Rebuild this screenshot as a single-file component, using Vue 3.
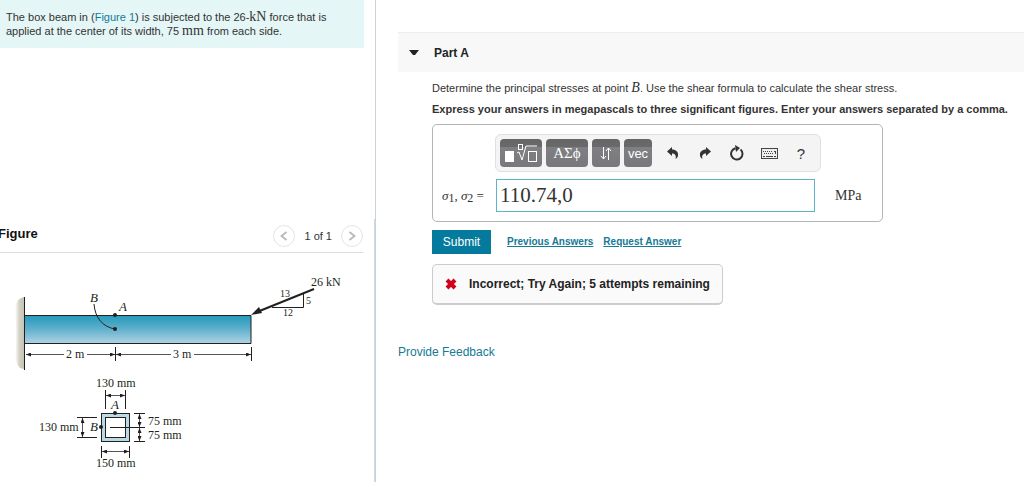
<template>
  <div class="page">
    <aside class="left">
      <section class="problem">
        <p>
          The box beam in (<a href="#figure">Figure 1</a>) is subjected to the 26-<span class="math">kN</span> force that is
          applied at the center of its width, 75 <span class="math">mm</span> from each side.
        </p>
      </section>

      <section id="figure" class="figure">
        <header class="figure-header">
          <h2>Figure</h2>
          <nav class="pager">
            <button type="button" aria-label="Previous figure">
              <svg width="8" height="10" viewBox="0 0 8 10"><path d="M6.5 1L1.5 5l5 4" /></svg>
            </button>
            <span>{{ current }} of {{ total }}</span>
            <button type="button" aria-label="Next figure">
              <svg width="8" height="10" viewBox="0 0 8 10"><path d="M1.5 1l5 4-5 4" /></svg>
            </button>
          </nav>
        </header>

        <svg class="drawing" width="364" height="229" viewBox="0 253 364 229">
          <defs>
            <linearGradient id="beam" x1="0" y1="0" x2="0" y2="1">
              <stop offset="0" stop-color="#2399bb" />
              <stop offset="0.45" stop-color="#58adca" />
              <stop offset="1" stop-color="#add2e3" />
            </linearGradient>
            <linearGradient id="wall" x1="0" y1="0" x2="1" y2="0">
              <stop offset="0" stop-color="#ffffff" />
              <stop offset="0.5" stop-color="#d3d1c4" />
              <stop offset="1" stop-color="#c5c3b3" />
            </linearGradient>
            <marker id="tip" viewBox="0 0 5 4" refX="5" refY="2" markerWidth="5" markerHeight="4"
              markerUnits="userSpaceOnUse" orient="auto-start-reverse">
              <path d="M0 0L5 2L0 4z" fill="#231f20" />
            </marker>
          </defs>

          <!-- wall and beam -->
          <path d="M24 297Q14 299 15 314Q17 332 16 347Q14 363 20 368L24 369z" fill="url(#wall)" />
          <rect x="25" y="315" width="226" height="28" fill="url(#beam)" />
          <path class="edge" d="M25 315.500H251V343.500H25" />
          <path class="edge" d="M24.500 297V370" />

          <!-- points on the beam -->
          <path class="edge" d="M94 304C95 318 103 327 115 329" />
          <circle cx="115" cy="315" r="2" />
          <circle cx="115" cy="329" r="2" />
          <text class="point" x="90" y="302">B</text>
          <text class="point" x="119" y="311">A</text>

          <!-- force -->
          <path class="thin" d="M272 307.500H303.500V294" />
          <path class="force" d="M314 289L257 312" />
          <path d="M251 315L259 307L262 313z" />
          <text class="label" x="311" y="286">26 kN</text>
          <text class="small" x="280" y="297">13</text>
          <text class="small" x="306" y="304">5</text>
          <text class="small" x="283" y="316">12</text>

          <!-- spans -->
          <path class="dim" marker-start="url(#tip)" d="M26 354.500H64" />
          <path class="dim" marker-end="url(#tip)" d="M87 354.500H115" />
          <path class="dim" marker-start="url(#tip)" d="M116 354.500H171" />
          <path class="dim" marker-end="url(#tip)" d="M194 354.500H251" />
          <path class="thin" d="M115.500 347V361M251.500 347V361" />
          <text class="label" x="66" y="358">2 m</text>
          <text class="label" x="173" y="358">3 m</text>

          <!-- cross section -->
          <rect x="101.500" y="413.500" width="28" height="28" fill="#b8dbe6" stroke="#231f20" />
          <rect x="105.500" y="417.500" width="20" height="20" fill="#fff" stroke="#231f20" />
          <path class="thin" d="M110 427.500H145" />
          <circle cx="115" cy="413" r="2" />
          <circle cx="101" cy="427" r="2" />
          <text class="point" x="111" y="409">A</text>
          <text class="point" x="90" y="431">B</text>

          <text class="label" x="96" y="387">130 mm</text>
          <path class="thin" d="M105.500 390V409M125.500 390V409" />
          <path class="dim" marker-start="url(#tip)" marker-end="url(#tip)" d="M106 395.500H125" />

          <text class="label" x="39" y="431">130 mm</text>
          <path class="thin" d="M77 417.500H97M77 437.500H97" />
          <path class="dim" marker-start="url(#tip)" marker-end="url(#tip)" d="M82.500 418V437" />

          <path class="thin" d="M134 413.500H145M134 441.500H145" />
          <path class="dim" marker-start="url(#tip)" marker-end="url(#tip)" d="M139.500 414V427" />
          <path class="dim" marker-start="url(#tip)" marker-end="url(#tip)" d="M139.500 428V441" />
          <text class="label" x="148" y="425">75 mm</text>
          <text class="label" x="148" y="439">75 mm</text>

          <path class="thin" d="M101.500 446V458M129.500 446V458" />
          <path class="dim" marker-start="url(#tip)" marker-end="url(#tip)" d="M102 451.500H129" />
          <text class="label" x="96" y="467">150 mm</text>
        </svg>
      </section>
    </aside>

    <main class="right">
      <header class="part-header">
        <svg width="10" height="5" viewBox="0 0 10 5"><path d="M0 0H10L6 5H4z" fill="#222" /></svg>
        <h2>Part A</h2>
      </header>

      <form class="part-body" @submit.prevent>
        <p class="question">
          Determine the principal stresses at point <i class="math">B</i>. Use the shear formula to calculate the shear stress.
        </p>
        <p class="instructions">
          Express your answers in megapascals to three significant figures. Enter your answers separated by a comma.
        </p>

        <div class="answer-box">
          <div class="toolbar">
            <button type="button" class="key wide" aria-label="Templates">
              <svg width="34" height="20" viewBox="0 0 34 20" fill="none" stroke="#fff">
                <rect x="1" y="8" width="9" height="11" fill="#fff" stroke="none" />
                <rect x="14.500" y="1.500" width="4" height="5" />
                <path d="M13 10l2-1 3 8 4-14h11" />
                <rect x="24.500" y="8.500" width="8" height="10" />
              </svg>
            </button>
            <button type="button" class="key wide greek">ΑΣϕ</button>
            <button type="button" class="key" aria-label="Subscript and superscript">
              <svg width="12" height="13" viewBox="0 0 12 13" fill="none" stroke="#fff">
                <path d="M3.500 0V12M1 9l2.500 3L6 9M8.500 13V1M6 4l2.500-3L11 4" />
              </svg>
            </button>
            <button type="button" class="key vec">vec</button>
            <div class="tools">
              <button type="button" class="tool" aria-label="Undo">
                <svg width="12" height="12" viewBox="0 0 12 12">
                  <path d="M0 4.500L5 0V2.500C9 2.500 11.500 5 11 8.500C10.800 10 10 11 8.500 12C9.500 9 8.500 6.500 5 6.500V9z" fill="#333" />
                </svg>
              </button>
              <button type="button" class="tool" aria-label="Redo">
                <svg width="12" height="12" viewBox="0 0 12 12">
                  <path d="M12 4.500L7 0V2.500C3 2.500 .5 5 1 8.500C1.200 10 2 11 3.500 12C2.500 9 3.500 6.500 7 6.500V9z" fill="#333" />
                </svg>
              </button>
              <button type="button" class="tool" aria-label="Reset">
                <svg width="14" height="16" viewBox="0 0 14 16">
                  <path d="M10.500 4.500A5.700 5.700 0 1 1 5.500 3.300" fill="none" stroke="#333" stroke-width="2" />
                  <path d="M5 0L10 3L6 7z" fill="#333" />
                </svg>
              </button>
              <button type="button" class="tool" aria-label="Keyboard shortcuts">
                <svg width="17" height="11" viewBox="0 0 17 11">
                  <rect x=".5" y=".5" width="16" height="10" fill="#eee" stroke="#444" />
                  <path d="M2 3.500H12M3 5.500H13M13 3.500H15" stroke="#444" stroke-dasharray="1 1" />
                  <path d="M14.500 3V6" stroke="#444" />
                  <path d="M2 8.500H4M5 8.500H12M13 8.500H15" stroke="#444" />
                </svg>
              </button>
              <button type="button" class="tool help" aria-label="Help">?</button>
            </div>
          </div>
          <div class="answer-row">
            <label for="answer"><i>σ</i><sub>1</sub>, <i>σ</i><sub>2</sub> =</label>
            <input id="answer" v-model="answer" type="text">
            <span class="units">MPa</span>
          </div>
        </div>

        <div class="actions">
          <button type="submit" class="submit">Submit</button>
          <a href="#previous">Previous Answers</a>
          <a href="#request">Request Answer</a>
        </div>

        <div class="result">
          <svg width="12" height="12" viewBox="0 0 12 12"><path d="M2 2L10 10M10 2L2 10" stroke="#d0021b" stroke-width="4" /></svg>
          <span>Incorrect; Try Again; {{ attempts }} attempts remaining</span>
        </div>
      </form>

      <a class="feedback" href="#feedback">Provide Feedback</a>
    </main>
  </div>
</template>

<script setup>
import { ref } from 'vue';

const answer = ref('110.74,0');
const attempts = ref(5);
const current = ref(1);
const total = 1;
</script>

<style>
body {
  margin: 0;
  background: #fff;
}
</style>

<style scoped>
* {
  box-sizing: border-box;
}

.page {
  display: flex;
  min-height: 100vh;
  overflow: hidden;
  font-family: "Liberation Sans", Arial, sans-serif;
  font-size: 12px;
  line-height: 14px;
  color: #333;
}

h2,
p {
  margin: 0;
}

a {
  color: #147a96;
  text-decoration: none;
}

button {
  font-family: inherit;
  padding: 0;
  border: 0;
}

.math {
  font-family: "Liberation Serif", serif;
  font-size: 14px;
  line-height: 12px;
}

/* Left panel */
.left {
  flex: 0 0 376px;
  display: flex;
  flex-direction: column;
  justify-content: space-between;
  border-right: 1px solid #c9d3da;
}

.problem {
  margin-right: 11px;
  padding: 10px 24px 10px 6px;
  background: #e5f6f6;
  font-size: 11px;
}

.figure {
  border-right: 1px solid #cfd8de;
}

.figure-header {
  display: flex;
  align-items: center;
  justify-content: space-between;
  height: 34px;
  margin-right: 11px;
  border-bottom: 1px solid #ddd;
}

.figure-header h2 {
  margin-left: -2px;
  padding-bottom: 4px;
  font-size: 13px;
  color: #111;
}

.pager {
  display: flex;
  align-items: center;
  gap: 9px;
}

.pager span {
  font-size: 11px;
}

.pager button {
  display: flex;
  align-items: center;
  justify-content: center;
  width: 22px;
  height: 22px;
  border: 1px solid #e4e4e4;
  border-radius: 50%;
  background: #fff;
}

.pager path {
  fill: none;
  stroke: #bbb;
  stroke-width: 2;
}

.drawing {
  display: block;
  font-family: "Liberation Serif", serif;
  fill: #231f20;
}

.edge,
.thin,
.dim,
.force {
  fill: none;
  stroke: #231f20;
}

.dim {
  stroke: #555;
}

.force {
  stroke-width: 2;
}

.label {
  font-size: 12px;
}

.small {
  font-size: 10px;
}

.point {
  font-size: 13px;
  font-style: italic;
}

/* Right panel */
.right {
  flex: 1;
  min-width: 0;
  padding: 32px 0 0 22px;
}

.part-header {
  display: flex;
  align-items: center;
  gap: 15px;
  height: 40px;
  padding-left: 11px;
  border-top: 1px solid #eee;
  background: #f8f8f8;
}

.part-header h2 {
  font-size: 12px;
  color: #222;
}

.part-body {
  padding-left: 34px;
}

.question,
.instructions {
  font-size: 11px;
  white-space: nowrap;
}

.question {
  padding-top: 9px;
}

.instructions {
  padding-top: 7px;
  font-weight: bold;
}

.answer-box {
  width: 451px;
  margin-top: 8px;
  padding: 9px 0 9px 9px;
  border: 1px solid #b5b5b5;
  border-radius: 5px;
}

.toolbar {
  display: flex;
  align-items: center;
  gap: 4px;
  width: 326px;
  height: 38px;
  margin-left: 53px;
  padding: 0 4px;
  border: 1px solid #e0e0e0;
  border-radius: 6px;
  background: #f4f4f4;
}

.key {
  display: flex;
  align-items: center;
  justify-content: center;
  width: 28px;
  height: 28px;
  border-radius: 4px;
  background: linear-gradient(#666 0, #6a6a6a 8px, #808084 8px, #77777c 100%);
  color: #fff;
}

.key.wide {
  width: 42px;
}

.greek {
  font-family: "Liberation Serif", serif;
  font-size: 15px;
}

.vec {
  font-size: 13px;
}

.tools {
  display: flex;
  gap: 4px;
  margin-left: 3px;
}

.tool {
  display: flex;
  align-items: center;
  justify-content: center;
  width: 28px;
  height: 28px;
  background: none;
  color: #333;
}

.help {
  font-size: 15px;
}

.answer-row {
  display: flex;
  align-items: center;
  margin-top: 7px;
}

.answer-row label {
  width: 54px;
  font-family: "Liberation Serif", serif;
  font-size: 13px;
}

.answer-row sub {
  font-size: 12px;
  line-height: 0;
  vertical-align: -2px;
}

.answer-row input {
  width: 319px;
  height: 33px;
  padding: 0 3px;
  border: 1px solid #5fb3c6;
  outline: none;
  background: #fff;
  font-family: "Liberation Serif", serif;
  font-size: 21px;
  color: #333;
}

.units {
  margin-left: 20px;
  font-family: "Liberation Serif", serif;
  font-size: 14px;
}

.actions {
  display: flex;
  align-items: center;
  margin-top: 8px;
}

.submit {
  width: 59px;
  height: 24px;
  margin-right: 16px;
  background: #047a9c;
  color: #fff;
  font-size: 12px;
}

.actions a {
  margin-right: 10px;
  font-size: 10px;
  font-weight: bold;
  text-decoration: underline;
}

.result {
  display: flex;
  align-items: center;
  gap: 12px;
  width: fit-content;
  height: 41px;
  margin-top: 10px;
  padding: 0 12px;
  border: 1px solid #ccc;
  border-bottom-width: 2px;
  border-radius: 5px;
  background: #fafafa;
  font-weight: bold;
  color: #222;
}

.feedback {
  display: inline-block;
  margin-top: 40px;
}
</style>
